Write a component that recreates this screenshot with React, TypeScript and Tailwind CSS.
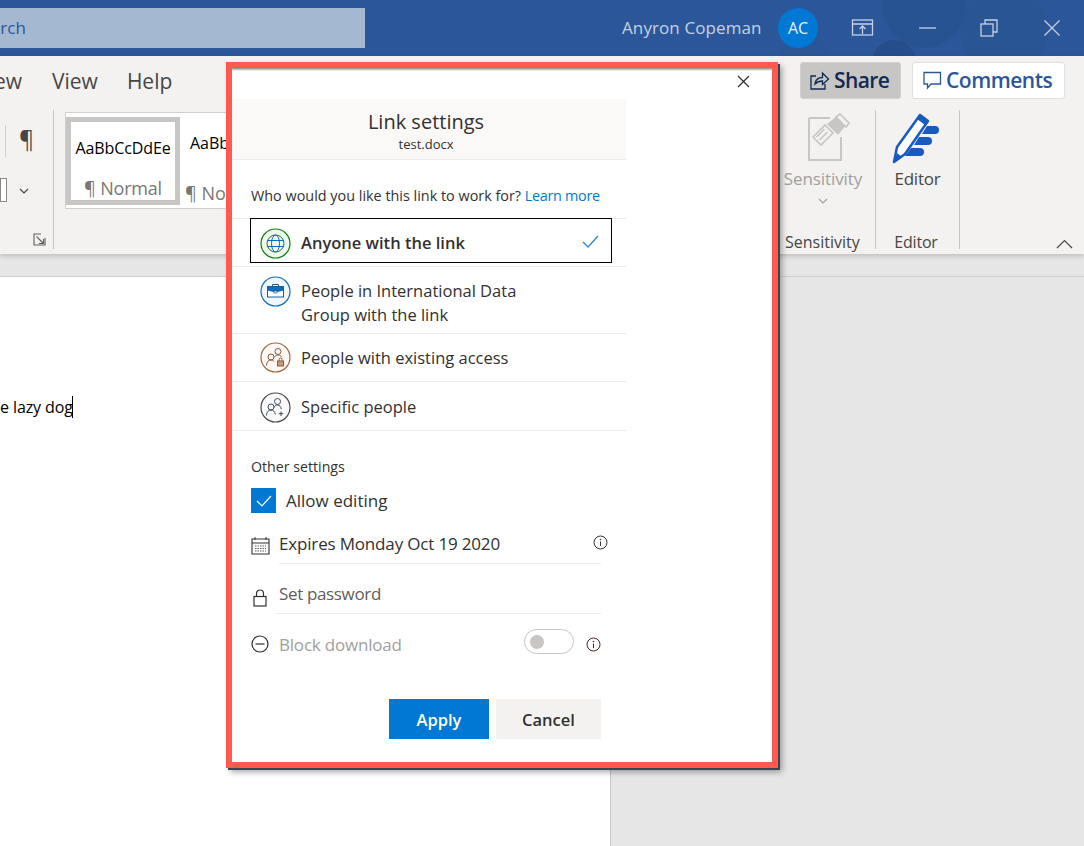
import React from "react";

const F = { fontFamily: '"Open Sans", "Noto Sans", sans-serif' };

function Globe() {
  return (
    <svg width="31" height="31" viewBox="0 0 31 31" fill="none">
      <circle cx="15.5" cy="15.5" r="14.5" fill="#f1f6ef" stroke="#107c10" strokeWidth="1.2" />
      <circle cx="15.5" cy="15.5" r="8.5" stroke="#107c10" strokeWidth="1" />
      <ellipse cx="15.5" cy="15.5" rx="4" ry="8.5" stroke="#0f6cbd" strokeWidth="1" />
      <path d="M7.5 12.5h16M7.5 18.5h16" stroke="#0f6cbd" strokeWidth="1" />
    </svg>
  );
}
function Briefcase() {
  return (
    <svg width="31" height="31" viewBox="0 0 31 31" fill="none">
      <circle cx="15.5" cy="15.5" r="14.5" fill="#eff6fc" stroke="#106ebe" strokeWidth="1.2" />
      <rect x="7.5" y="10.5" width="16" height="10.5" stroke="#1b5e93" strokeWidth="1" fill="#fff" />
      <path d="M12.5 10.5V8.5h6v2" stroke="#1b5e93" strokeWidth="1" />
      <path d="M7.5 11h16v3.5l-6 1.5h-4l-6-1.5z" fill="#0f6cbd" />
      <rect x="14" y="15" width="3" height="2" fill="#fff" stroke="#1b5e93" strokeWidth=".7" />
    </svg>
  );
}
function PeopleLock() {
  return (
    <svg width="31" height="31" viewBox="0 0 31 31" fill="none">
      <circle cx="15.5" cy="15.5" r="14.5" fill="#fdf8f5" stroke="#a5673f" strokeWidth="1.2" />
      <g stroke="#8a5a3c" strokeWidth="1">
        <circle cx="11" cy="15" r="3" />
        <path d="M6.500 23.500c0-3.500 2-5.500 4.500-5.500 1.500 0 2.500.6 3.200 1.500" />
        <circle cx="18" cy="9.500" r="3" />
        <path d="M14 15.500c.9-1.200 2.300-2.500 4-2.500 1.700 0 3 .8 3.800 2.200" />
        <rect x="17.500" y="19" width="6" height="5" fill="#c79a7c" />
        <path d="M19 19v-1.500a1.500 1.500 0 0 1 3 0V19" />
      </g>
    </svg>
  );
}
function PeoplePlus() {
  return (
    <svg width="31" height="31" viewBox="0 0 31 31" fill="none">
      <circle cx="15.5" cy="15.5" r="14.500" fill="#fafafa" stroke="#4a4a4a" strokeWidth="1.200" />
      <g stroke="#3b4a5a" strokeWidth="1">
        <circle cx="11" cy="15" r="3" />
        <path d="M6.500 23.500c0-3.500 2-5.500 4.500-5.500 2.300 0 4 1.500 4.300 4.500" />
        <circle cx="17.500" cy="9.500" r="3" />
        <path d="M14 15.500c.8-1.800 2-2.500 3.500-2.500 2 0 3.500 1.800 3.800 4.200" />
        <path d="M21 19.500v4.500M18.700 21.700h4.600" />
      </g>
    </svg>
  );
}
function Info({ c = "#323130" }: { c?: string }) {
  return (
    <svg width="15" height="15" viewBox="0 0 15 15" fill="none">
      <circle cx="7.500" cy="7.500" r="6.500" stroke={c} />
      <path d="M7.500 6.500v4.500" stroke={c} />
      <circle cx="7.500" cy="4.500" r=".8" fill={c} />
    </svg>
  );
}
function Row({ icon, children, h, extra = "" }: { icon: React.ReactNode; children: React.ReactNode; h: string; extra?: string }) {
  return (
    <div className={`flex items-center pl-[28px] border-b border-[#edebe9] ${h} ${extra}`}>
      <div className="w-[41px] shrink-0 flex">{icon}</div>
      <div className="text-[16.5px] leading-[24px] text-[#323130]">{children}</div>
    </div>
  );
}

function TitleBar() {
  return (
    <div className="h-[56px] bg-[#2b579a] flex items-center relative overflow-hidden shrink-0">
      <svg className="absolute right-0 top-0" width="320" height="56" viewBox="0 0 320 56" fill="none">
        <circle cx="160" cy="6" r="42" fill="#27508f" opacity=".6" />
        <circle cx="240" cy="30" r="44" fill="#295493" opacity=".7" />
        <circle cx="130" cy="62" r="22" fill="#264e8c" />
        <circle cx="40" cy="58" r="24" fill="#2a5596" />
      </svg>
      <div className="relative w-[365px] h-[40px] bg-[#a5b8d2] flex items-center overflow-hidden">
        <span className="text-[17px] ml-[-28px] text-[#2b579a]">Search</span>
      </div>
      <span className="relative ml-[257px] text-[17px] tracking-[0.1px] text-[#c5d1e3] whitespace-nowrap w-[140px]">Anyron Copeman</span>
      <div className="relative ml-[16px] w-[40px] h-[40px] rounded-full bg-[#0078d4] text-[#e8f2fb] text-[16px] flex items-center justify-center">AC</div>
      <svg className="relative ml-[33px]" width="24" height="20" viewBox="0 0 24 20" fill="none" stroke="#c5d1e3" strokeWidth="1.300">
        <rect x="1.500" y="2" width="20" height="15" />
        <path d="M1.500 6h20M11.500 16V8.500M8.500 11l3-3 3 3" />
      </svg>
      <svg className="relative ml-[43px]" width="20" height="4" viewBox="0 0 20 4" stroke="#c5d1e3" strokeWidth="1.300">
        <path d="M1 2h17" />
      </svg>
      <svg className="relative ml-[42px]" width="18" height="18" viewBox="0 0 18 18" fill="none" stroke="#c5d1e3" strokeWidth="1.300">
        <rect x="1" y="5" width="12" height="12" />
        <path d="M5 5V1h12v12h-4" />
      </svg>
      <svg className="relative ml-[45px]" width="18" height="18" viewBox="0 0 18 18" fill="none" stroke="#c5d1e3" strokeWidth="1.300">
        <path d="M1.500 1.500l15 15M16.500 1.500l-15 15" />
      </svg>
    </div>
  );
}

function TabsRow() {
  return (
    <div className="h-[54px] flex items-center relative">
      <div className="w-[22px] overflow-hidden flex justify-end mt-[-2px]">
        <span className="text-[21px] text-[#484644]">View</span>
      </div>
      <span className="ml-[30px] text-[21px] text-[#484644] mt-[-2px]">View</span>
      <span className="ml-[29px] text-[21px] text-[#484644] mt-[-2px]">Help</span>
      <div className="ml-auto flex items-center gap-[11px] mr-[19px] mt-[-6px]">
        <div className="w-[101px] h-[37px] rounded-[3px] bg-[#c8c6c4] border border-[#d2d0ce] flex items-center pl-[9px]">
          <svg width="20" height="22" viewBox="0 0 20 22" fill="none" stroke="#0f2a54" strokeWidth="1.300">
            <path d="M6 7H1v13h14v-5" />
            <path d="M5 15c.5-4 3-6.500 7.500-6.500V4l6 6-6 5.500V12c-3 0-5.500 1-7.500 3z" />
          </svg>
          <span className="ml-[4px] mt-[2px] text-[21px] font-semibold tracking-[-0.6px] text-[#0f2a54]">Share</span>
        </div>
        <div className="w-[153px] h-[37px] rounded-[3px] bg-white border border-[#e1dfdd] flex items-center pl-[10px]">
          <svg width="19" height="19" viewBox="0 0 19 19" fill="none" stroke="#2b579a" strokeWidth="1.300">
            <path d="M1 1.500h16.500v11.500H8l-3.500 4V13H1z" />
          </svg>
          <span className="ml-[4px] mt-[2px] text-[21px] font-semibold tracking-[-0.5px] text-[#2b579a]">Comments</span>
        </div>
      </div>
    </div>
  );
}

function RibbonLeft() {
  return (
    <div className="w-[54px] h-[139px] border-r border-[#c8c6c4] relative shrink-0">
      <div className="absolute left-[5px] top-[15px] w-px h-[32px] bg-[#d2d0ce]" />
      <span className="absolute left-[19px] top-[14px] text-[23px] leading-[30px] text-[#484644]">¶</span>
      <div className="absolute left-0 top-[68px] w-[7px] h-[24px] border border-[#8a8886] bg-white" />
      <svg className="absolute left-[19px] top-[78px]" width="10" height="6" viewBox="0 0 10 6" fill="none" stroke="#484644" strokeWidth="1.200">
        <path d="M1 1l4 4 4-4" />
      </svg>
      <svg className="absolute left-[33px] top-[123px]" width="13" height="13" viewBox="0 0 13 13" fill="none" stroke="#605e5c" strokeWidth="1.100">
        <path d="M12 5v7H1V1h7" />
        <path d="M3.500 3.500l7 7M6 10.500h4.500V6" />
      </svg>
    </div>
  );
}

function Gallery() {
  return (
    <div className="ml-[11px] mt-[2px] w-[200px] h-[97px] bg-white border border-[#d2d0ce] flex items-center shrink-0">
      <div className="w-[114px] h-[88px] border-[5px] border-[#c8c6c4] flex flex-col items-center justify-between pt-[16px] shrink-0">
        <span className="text-[16px] leading-[20px] text-black tracking-[-0.1px] whitespace-nowrap">AaBbCcDdEe</span>
        <span className="text-[18px] leading-[24px] tracking-[-0.2px] text-[#797775]">¶ Normal</span>
      </div>
      <div className="flex flex-col h-[88px] justify-between pt-[16px] pl-[5px]">
        <span className="text-[16px] leading-[20px] text-black pl-[5px]">AaBb</span>
        <span className="text-[18px] leading-[24px] text-[#797775]">¶ No</span>
      </div>
    </div>
  );
}

function RibbonRight() {
  return (
    <div className="ml-auto flex shrink-0">
      <div className="w-[93px] h-[139px] border-r border-[#c8c6c4] flex flex-col items-center relative">
        <svg className="mt-[3px]" width="46" height="48" viewBox="0 0 46 48" fill="none">
          <path d="M3 5h21M3 5v42h32V24" stroke="#c8c6c4" strokeWidth="2" fill="#f3f2f1" />
          <path d="M7 24l12-12 8 8-12 12zM10.500 24l8-8M13.500 27l8-8" stroke="#c8c6c4" strokeWidth="1.700" fill="#f3f2f1" />
          <path d="M21 11l10-8 9 9-8 10z" fill="#c8c6c4" />
          <path d="M30 4l4-3 9 9-3 4z" stroke="#c8c6c4" strokeWidth="1.700" fill="#f3f2f1" />
        </svg>
        <span className="text-[17px] leading-[24px] tracking-[-0.1px] text-[#a19f9d] mt-[6px] mr-[12px]">Sensitivity</span>
        <svg className="mt-[7px] mr-[12px]" width="10" height="6" viewBox="0 0 10 6" fill="none" stroke="#a19f9d" strokeWidth="1.200">
          <path d="M1 1l4 4 4-4" />
        </svg>
        <span className="absolute bottom-[-4px] left-[2px] text-[16px] leading-[22px] text-[#484644]">Sensitivity</span>
      </div>
      <div className="w-[84px] h-[139px] border-r border-[#c8c6c4] flex flex-col items-center relative">
        <svg className="mt-[2px] mr-[4px]" width="52" height="52" viewBox="0 0 52 52" fill="none">
          <path d="M4 50l3-15L30 3l8 6-23 33z" fill="#fff" stroke="#185abd" strokeWidth="2.500" strokeLinejoin="round" />
          <path d="M30 3l8 6-3 4-8-6z" fill="#185abd" />
          <path d="M4 50l3-9 5 4z" fill="#185abd" />
          <path d="M37 14h8a4 4 0 0 1 0 8H32zM29 25h9a4 4 0 0 1 0 8H24zM21 36h9a4 4 0 0 1 0 8H15z" fill="#185abd" />
        </svg>
        <span className="text-[17px] leading-[24px] tracking-[-0.2px] text-[#484644] mt-[3px]">Editor</span>
        <span className="absolute bottom-[-4px] text-[16px] leading-[22px] tracking-[-0.2px] text-[#484644] mr-[3px]">Editor</span>
      </div>
      <div className="w-[124px] relative">
        <svg className="absolute right-[11px] bottom-[0px]" width="17" height="10" viewBox="0 0 17 10" fill="none" stroke="#484644" strokeWidth="1.200">
          <path d="M1 9l7.500-7.500L16 9" />
        </svg>
      </div>
    </div>
  );
}

function Dialog() {
  return (
    <div className="absolute left-[226px] top-[62px] w-[552px] h-[706px] bg-white border-[6px] border-[#ff5a4d] shadow-[2px_2px_0_#3a4450,4px_4px_6px_rgba(0,0,0,0.35)]">
      <div className="absolute inset-x-0 top-0 h-[3px] bg-gradient-to-b from-[#8a8a8a] to-white" />
      <svg className="absolute left-[505px] top-[7px]" width="13" height="13" viewBox="0 0 13 13" stroke="#323130" strokeWidth="1.300">
        <path d="M1 1l11 11M12 1L1 12" />
      </svg>
      <div className="w-[394px] pt-[31px]">
        <div className="h-[61px] bg-[#faf9f8] border-b border-[#edebe9] flex flex-col items-center pt-[9px] pr-[6px]">
          <span className="text-[20px] leading-[28px] text-[#323130]">Link settings</span>
          <span className="text-[13px] leading-[16px] text-[#323130]">test.docx</span>
        </div>
        <div className="h-[59px] flex items-center pl-[19px] pt-[13px] border-b border-[#edebe9] text-[14.4px] text-[#323130] whitespace-nowrap">
          Who would you like this link to work for?&nbsp;<span className="text-[#0078d4] tracking-[-0.3px]">Learn more</span>
        </div>
        <div className="relative h-[48px] border-b border-[#edebe9]">
          <div className="absolute left-[18px] top-[-1px] w-[362px] h-[45px] border border-black bg-white flex items-center pl-[9px] pt-[6px]">
            <div className="w-[41px] flex shrink-0"><Globe /></div>
            <span className="text-[16.5px] font-semibold text-[#323130]">Anyone with the link</span>
            <svg className="ml-auto mr-[12px] mb-[4px]" width="17" height="13" viewBox="0 0 17 13" fill="none" stroke="#2b88d8" strokeWidth="1.300">
              <path d="M1 7l5 5L16 1" />
            </svg>
          </div>
        </div>
        <div className="h-[67px] flex pl-[28px] border-b border-[#edebe9]">
          <div className="w-[41px] shrink-0 flex items-start pt-[9px]"><Briefcase /></div>
          <div className="text-[16.5px] leading-[24px] text-[#323130] w-[240px] pt-[12px]">People in International Data Group with the link</div>
        </div>
        <Row h="h-[48px]" icon={<PeopleLock />}>People with existing access</Row>
        <Row h="h-[49px]" extra="pt-[2px]" icon={<PeoplePlus />}>Specific people</Row>

        <div className="pl-[19px] pr-[25px]">
          <div className="mt-[26px] text-[14.2px] leading-[20px] text-[#323130]">Other settings</div>
          <div className="mt-[11px] flex items-center h-[25px]">
            <div className="w-[25px] h-[25px] bg-[#0078d4] flex items-center justify-center">
              <svg width="16" height="12" viewBox="0 0 16 12" fill="none" stroke="#fff" strokeWidth="1.200">
                <path d="M1 6l5 5L15 1" />
              </svg>
            </div>
            <span className="ml-[10px] text-[17px] text-[#323130]">Allow editing</span>
          </div>
          <div className="mt-[17px] flex h-[34px]">
            <svg className="mt-[6px] shrink-0" width="19" height="19" viewBox="0 0 19 19" fill="none">
              <path d="M1 3h17v15H1zM1 7h17" stroke="#323130" strokeWidth="1.100" />
              <path d="M4 1v3M15 1v3" stroke="#323130" />
              <path d="M4 10h11M4 12.500h11M4 15h11" stroke="#605e5c" strokeDasharray="1.500 1" />
            </svg>
            <div className="ml-[9px] flex-1 flex border-b border-[#edebe9] h-[34px] pt-[2px] relative">
              <span className="text-[17px] leading-[24px] tracking-[-0.17px] text-[#323130]">Expires Monday Oct 19 2020</span>
              <div className="absolute right-[-7px] top-[5px] flex"><Info /></div>
            </div>
          </div>
          <div className="mt-[16px] flex h-[34px]">
            <svg className="mt-[9px] ml-[2px] shrink-0" width="14" height="18" viewBox="0 0 14 18" fill="none" stroke="#323130" strokeWidth="1.200">
              <rect x="1" y="7.500" width="12" height="9.500" />
              <path d="M3.500 7.500V4.500a3.500 3.500 0 0 1 7 0v3" />
            </svg>
            <div className="ml-[9px] flex-1 border-b border-[#edebe9] h-[34px] pt-[2px] pl-[3px]">
              <span className="text-[17px] leading-[24px] tracking-[-0.35px] text-[#605e5c]">Set password</span>
            </div>
          </div>
          <div className="mt-[16px] flex items-center h-[26px]">
            <svg className="shrink-0 mt-[2px]" width="18" height="18" viewBox="0 0 18 18" fill="none" stroke="#323130" strokeWidth="1.200">
              <circle cx="9" cy="9" r="8" />
              <path d="M4.500 9h9" />
            </svg>
            <span className="ml-[10px] mt-[4px] text-[17px] tracking-[-0.2px] text-[#a19f9d]">Block download</span>
            <div className="ml-auto mb-[3px] w-[50px] h-[25px] rounded-full border border-[#c8c6c4] bg-white flex items-center pl-[5px]">
              <div className="w-[14px] h-[14px] rounded-full bg-[#c8c6c4]" />
            </div>
            <div className="ml-[12px] mt-[2px] flex"><Info c="#4a2a20" /></div>
          </div>
          <div className="mt-[43px] flex justify-end gap-[7px]">
            <div className="w-[100px] h-[40px] pt-[2px] bg-[#0078d4] text-white font-semibold text-[16.5px] flex items-center justify-center">Apply</div>
            <div className="w-[105px] h-[40px] pt-[2px] bg-[#f3f2f1] text-[#323130] font-semibold text-[16.5px] flex items-center justify-center">Cancel</div>
          </div>
        </div>
      </div>
    </div>
  );
}

export default function App() {
  return (
    <div style={F} className="relative w-[1084px] h-[846px] overflow-hidden bg-[#e6e6e6] flex flex-col">
      <TitleBar />
      <div className="h-[198px] bg-[#f3f2f1] shadow-[0_2px_5px_rgba(0,0,0,0.18)] relative shrink-0">
        <TabsRow />
        <div className="flex">
          <RibbonLeft />
          <Gallery />
          <RibbonRight />
        </div>
      </div>
      <div className="h-[23px] shrink-0 border-b border-[#d2d0ce]" />
      <div className="flex-1 flex">
        <div className="w-[611px] bg-white border-r border-[#c8c6c4] pt-[119px]">
          <div className="w-[73px] h-[22px] overflow-hidden flex justify-start border-r border-black">
            <span className="text-[16px] leading-[22px] tracking-[-0.1px] text-black whitespace-nowrap">e lazy dog</span>
          </div>
        </div>
      </div>
      <Dialog />
    </div>
  );
}
